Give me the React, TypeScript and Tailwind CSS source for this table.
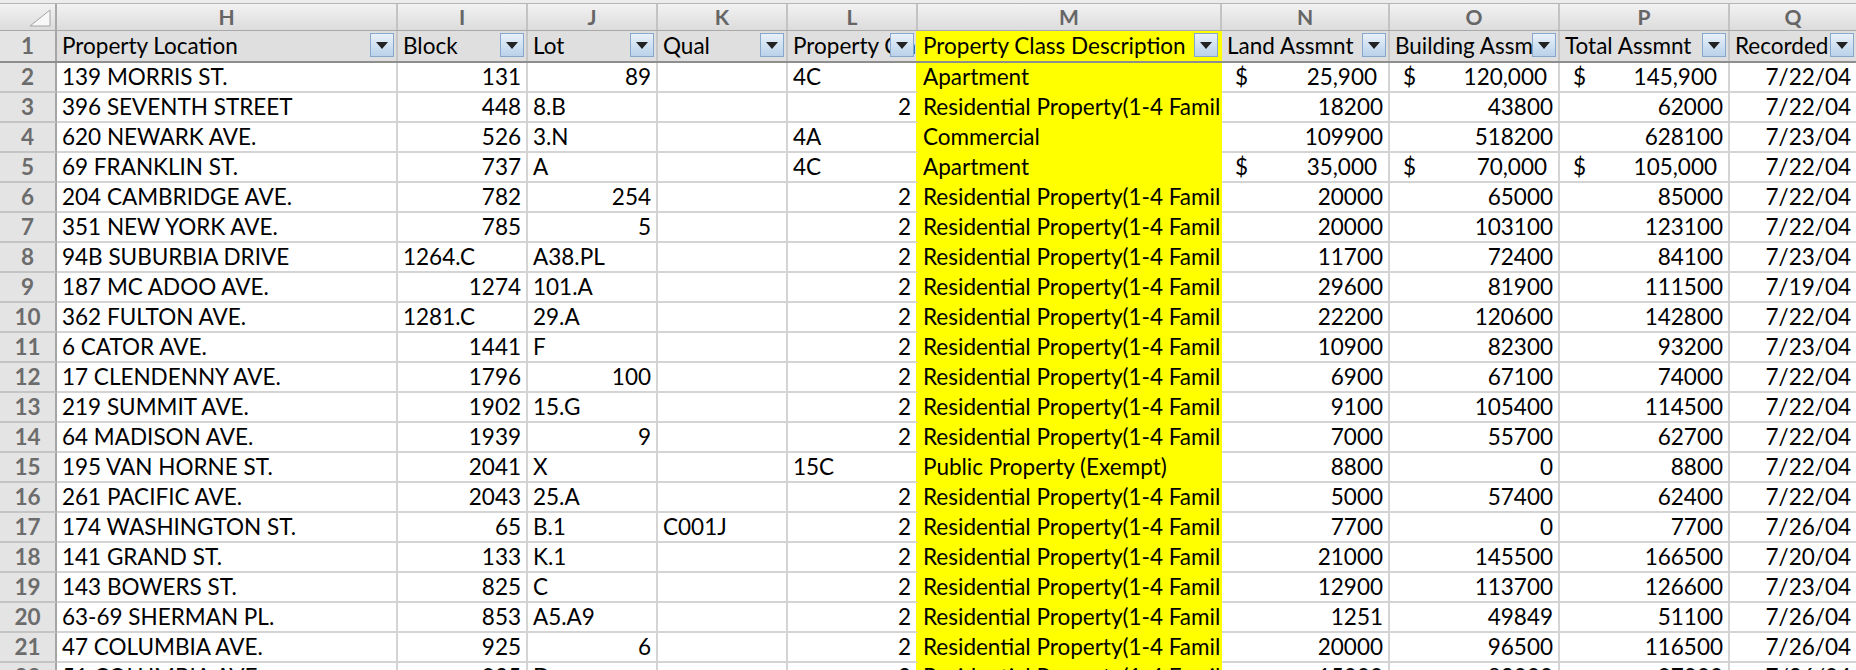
import React from "react";

type Val = string | number | { usd: string };

type Column = {
  letter: string;
  title: string;
  width: string;
  head: string;
  body: string;
  right?: boolean;
};

const GRID = "border-[#d4d4d4]";

const columns: Column[] = [
  { letter: "H", title: "Property Location", width: "w-[341px]", head: "bg-[#dfdfdf] border-r-[#c6c6c6]", body: GRID },
  { letter: "I", title: "Block", width: "w-[130px]", head: "bg-[#dfdfdf] border-r-[#c6c6c6]", body: GRID },
  { letter: "J", title: "Lot", width: "w-[130px]", head: "bg-[#dfdfdf] border-r-[#c6c6c6]", body: GRID },
  { letter: "K", title: "Qual", width: "w-[130px]", head: "bg-[#dfdfdf] border-r-[#c6c6c6]", body: GRID },
  // the yellow fill next door hides this gridline
  { letter: "L", title: "Property Class", width: "w-[130px]", head: "bg-[#dfdfdf] border-r-[#ffff00]", body: "border-b-[#d4d4d4] border-r-[#ffff00]" },
  { letter: "M", title: "Property Class Description", width: "w-[304px]", head: "bg-[#ffff00] border-r-[#ffff00]", body: "bg-[#ffff00] border-[#ffff00]" },
  { letter: "N", title: "Land Assmnt", width: "w-[168px]", head: "bg-[#dfdfdf] border-r-[#c6c6c6]", body: GRID },
  { letter: "O", title: "Building Assmnt", width: "w-[170px]", head: "bg-[#dfdfdf] border-r-[#c6c6c6]", body: GRID },
  { letter: "P", title: "Total Assmnt", width: "w-[170px]", head: "bg-[#dfdfdf] border-r-[#c6c6c6]", body: GRID },
  { letter: "Q", title: "Recorded", width: "w-[128px]", head: "bg-[#dfdfdf] border-r-[#c6c6c6]", body: GRID, right: true },
];

const RES = "Residential Property(1-4 Family)";

const rows: Val[][] = [
  ["139 MORRIS ST.", 131, 89, "", "4C", "Apartment", { usd: "25,900" }, { usd: "120,000" }, { usd: "145,900" }, "7/22/04"],
  ["396 SEVENTH STREET", 448, "8.B", "", 2, RES, 18200, 43800, 62000, "7/22/04"],
  ["620 NEWARK AVE.", 526, "3.N", "", "4A", "Commercial", 109900, 518200, 628100, "7/23/04"],
  ["69 FRANKLIN ST.", 737, "A", "", "4C", "Apartment", { usd: "35,000" }, { usd: "70,000" }, { usd: "105,000" }, "7/22/04"],
  ["204 CAMBRIDGE AVE.", 782, 254, "", 2, RES, 20000, 65000, 85000, "7/22/04"],
  ["351 NEW YORK AVE.", 785, 5, "", 2, RES, 20000, 103100, 123100, "7/22/04"],
  ["94B SUBURBIA DRIVE", "1264.C", "A38.PL", "", 2, RES, 11700, 72400, 84100, "7/23/04"],
  ["187 MC ADOO AVE.", 1274, "101.A", "", 2, RES, 29600, 81900, 111500, "7/19/04"],
  ["362 FULTON AVE.", "1281.C", "29.A", "", 2, RES, 22200, 120600, 142800, "7/22/04"],
  ["6 CATOR AVE.", 1441, "F", "", 2, RES, 10900, 82300, 93200, "7/23/04"],
  ["17 CLENDENNY AVE.", 1796, 100, "", 2, RES, 6900, 67100, 74000, "7/22/04"],
  ["219 SUMMIT AVE.", 1902, "15.G", "", 2, RES, 9100, 105400, 114500, "7/22/04"],
  ["64 MADISON AVE.", 1939, 9, "", 2, RES, 7000, 55700, 62700, "7/22/04"],
  ["195 VAN HORNE ST.", 2041, "X", "", "15C", "Public Property (Exempt)", 8800, 0, 8800, "7/22/04"],
  ["261 PACIFIC AVE.", 2043, "25.A", "", 2, RES, 5000, 57400, 62400, "7/22/04"],
  ["174 WASHINGTON ST.", 65, "B.1", "C001J", 2, RES, 7700, 0, 7700, "7/26/04"],
  ["141 GRAND ST.", 133, "K.1", "", 2, RES, 21000, 145500, 166500, "7/20/04"],
  ["143 BOWERS ST.", 825, "C", "", 2, RES, 12900, 113700, 126600, "7/23/04"],
  ["63-69 SHERMAN PL.", 853, "A5.A9", "", 2, RES, 1251, 49849, 51100, "7/26/04"],
  ["47 COLUMBIA AVE.", 925, 6, "", 2, RES, 20000, 96500, 116500, "7/26/04"],
  ["51 COLUMBIA AVE.", 925, "D", "", 2, RES, 15000, 82000, 97000, "7/26/04"],
];

function FilterButton() {
  return (
    <span className="absolute right-[2px] top-[2px] flex h-[24px] w-[24px] items-center justify-center border border-[#86a8cc] bg-linear-to-b from-[#e9f1f9] to-[#b9d2ea]">
      <svg width="12" height="7" viewBox="0 0 12 7">
        <path d="M0 0h12L6 7z" fill="#222" />
      </svg>
    </span>
  );
}

function LetterRow() {
  return (
    <div className="flex h-[27px] border-b border-[#a9a9a9] bg-linear-to-b from-[#f2f2f2] to-[#dcdcdc]">
      <div className="relative w-[57px] shrink-0 border-r-2 border-[#a9a9a9]">
        <svg className="absolute bottom-[3px] right-[4px]" width="22" height="18" viewBox="0 0 22 18">
          <path d="M21 1L21 17L1 17Z" fill="#f8f8f8" stroke="#a4a4a4" />
        </svg>
      </div>
      {columns.map((c) => (
        <div
          key={c.letter}
          className={`${c.width} shrink-0 border-r-2 border-[#c3c3c3] text-center text-[21px] font-bold leading-[26px] text-[#666]`}
        >
          {c.letter}
        </div>
      ))}
    </div>
  );
}

function HeaderRow() {
  return (
    <div className="flex h-[32px] border-b-2 border-[#8e8e8e]">
      <div className="w-[57px] shrink-0 border-r-2 border-[#a5a5a5] bg-[#e4e4e4] text-center font-bold leading-[30px] text-[#6c6c6c]">
        1
      </div>
      {columns.map((c) => (
        <div
          key={c.letter}
          className={`relative ${c.width} ${c.head} shrink-0 overflow-hidden whitespace-nowrap border-r-2 pl-[5px] leading-[30px]`}
        >
          {c.title}
          <FilterButton />
        </div>
      ))}
    </div>
  );
}

function Cell({ col, value }: { col: Column; value: Val }) {
  if (typeof value === "object") {
    return (
      <div className={`${col.width} ${col.body} flex h-[30px] shrink-0 justify-between overflow-hidden whitespace-nowrap border-b-2 border-r-2 pl-[13px] pr-[11px] leading-[28px]`}>
        <span>$</span>
        <span>{value.usd}</span>
      </div>
    );
  }
  const right = typeof value === "number" || col.right;
  return (
    <div
      className={`${col.width} ${col.body} flex h-[30px] shrink-0 overflow-hidden whitespace-nowrap border-b-2 border-r-2 leading-[28px] ${right ? "justify-end pr-[5px]" : "pl-[5px]"}`}
    >
      {String(value)}
    </div>
  );
}

function DataRow({ n, values }: { n: number; values: Val[] }) {
  return (
    <div className="flex">
      <div className="h-[30px] w-[57px] shrink-0 border-b-2 border-r-2 border-b-[#c4c4c4] border-r-[#a5a5a5] bg-[#e4e4e4] text-center font-bold leading-[28px] text-[#6c6c6c]">
        {n}
      </div>
      {columns.map((c, i) => (
        <Cell key={c.letter} col={c} value={values[i]} />
      ))}
    </div>
  );
}

export default function App() {
  return (
    <div className="h-[670px] w-[1856px] overflow-hidden bg-white font-['Lato',sans-serif] text-[22.5px] text-black">
      <div className="h-[4px] border-b border-[#b5b5b5] bg-[#ececec]" />
      <LetterRow />
      <HeaderRow />
      {rows.map((r, i) => (
        <DataRow key={i} n={i + 2} values={r} />
      ))}
    </div>
  );
}
